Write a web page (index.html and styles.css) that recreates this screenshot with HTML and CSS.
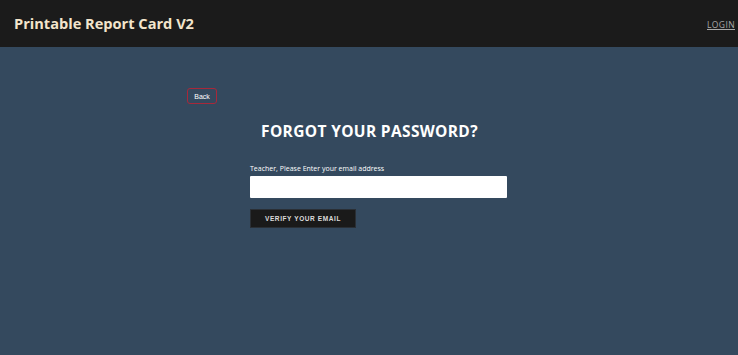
FILE: index.html
```html
<!DOCTYPE html>
<html>
<head>
<meta charset="utf-8">
<link rel="stylesheet" href="styles.css">
</head>
<body>
<header class="topbar">
  <div class="brand">Printable Report Card V2</div>
  <a class="login" href="#">LOGIN</a>
</header>
<main class="content">
  <div class="back-row"><button class="back">Back</button></div>
  <h1 class="title">FORGOT YOUR PASSWORD?</h1>
  <form class="form">
    <label class="label">Teacher, Please Enter your email address</label>
    <input class="input" type="text">
    <button class="verify" type="button">VERIFY YOUR EMAIL</button>
  </form>
</main>
</body>
</html>
```
FILE: styles.css
```css
html, body {
  margin: 0;
  padding: 0;
  height: 100%;
}
body {
  background: #34495e;
  font-family: "Open Sans", "Liberation Sans", sans-serif;
}
.topbar {
  height: 47px;
  background: #1b1b1b;
  display: flex;
  align-items: center;
  justify-content: space-between;
  padding: 0 3px 0 14px;
  box-sizing: border-box;
}
.brand {
  color: #f3e5cc;
  font-weight: 700;
  font-size: 14.6px;
  letter-spacing: 0;
  margin-top: -2px;
}
.login {
  color: #a9a9a9;
  font-size: 8.5px;
  letter-spacing: 0.4px;
  text-decoration: underline;
  margin-top: 2px;
}
.content {
  display: flex;
  flex-direction: column;
}
.back-row {
  padding: 41px 0 0 187px;
}
.back {
  width: 30px;
  height: 16px;
  padding: 0;
  background: transparent;
  border: 1px solid #a8283a;
  border-radius: 3px;
  color: #ffffff;
  font-family: "Liberation Sans", Arial, sans-serif;
  font-size: 7px;
  display: block;
}
.title {
  margin: 16px 0 0 0;
  text-align: center;
  color: #ffffff;
  font-size: 15.5px;
  font-weight: 700;
  letter-spacing: 0.35px;
  line-height: 22px;
  padding-left: 1px;
}
.form {
  display: flex;
  flex-direction: column;
  align-items: flex-start;
  padding-left: 250px;
  margin-top: 22px;
}
.label {
  color: #ffffff;
  font-size: 7px;
  line-height: 10px;
}
.input {
  width: 257px;
  height: 22px;
  box-sizing: border-box;
  margin: 2px 0 0 0;
  border: none;
  border-radius: 1px;
  background: #ffffff;
}
.verify {
  margin-top: 11px;
  width: 106px;
  height: 19px;
  padding: 0;
  background: #1a1a1a;
  border: 1px solid #2a2f35;
  color: #dcdcdc;
  font-family: "Liberation Sans", Arial, sans-serif;
  font-size: 6.5px;
  font-weight: 700;
  letter-spacing: 0.6px;
}
```
